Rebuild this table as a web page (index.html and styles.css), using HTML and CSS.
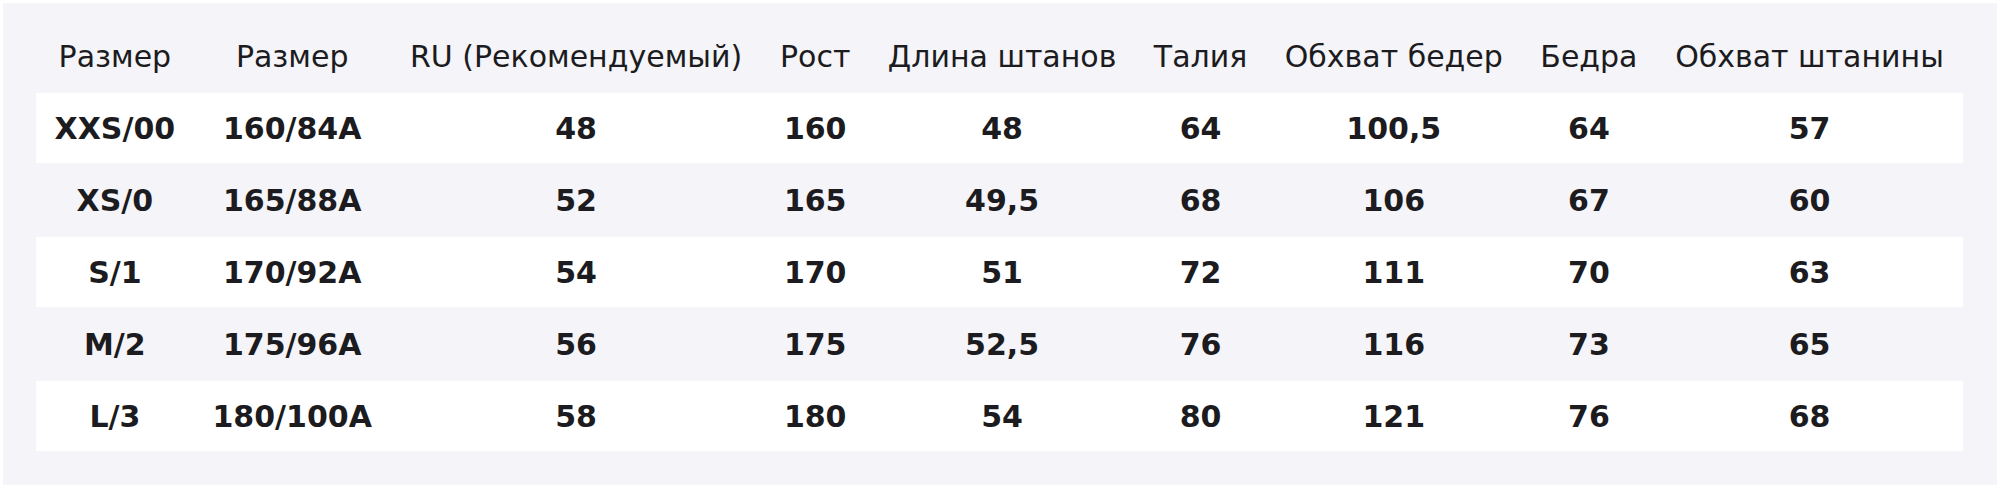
FILE: index.html
```html
<!DOCTYPE html>
<html lang="ru">
<head>
<meta charset="utf-8">
<title>Таблица размеров</title>
<link rel="stylesheet" href="styles.css">
</head>
<body>
<div class="panel">
  <table class="sizes">
    <thead>
      <tr>
        <th>Размер</th>
        <th>Размер</th>
        <th>RU (Рекомендуемый)</th>
        <th>Рост</th>
        <th>Длина штанов</th>
        <th>Талия</th>
        <th>Обхват бедер</th>
        <th>Бедра</th>
        <th>Обхват штанины</th>
      </tr>
    </thead>
    <tbody>
      <tr class="odd"><td>XXS/00</td><td>160/84A</td><td>48</td><td>160</td><td>48</td><td>64</td><td>100,5</td><td>64</td><td>57</td></tr>
      <tr><td>XS/0</td><td>165/88A</td><td>52</td><td>165</td><td>49,5</td><td>68</td><td>106</td><td>67</td><td>60</td></tr>
      <tr class="odd"><td>S/1</td><td>170/92A</td><td>54</td><td>170</td><td>51</td><td>72</td><td>111</td><td>70</td><td>63</td></tr>
      <tr><td>M/2</td><td>175/96A</td><td>56</td><td>175</td><td>52,5</td><td>76</td><td>116</td><td>73</td><td>65</td></tr>
      <tr class="odd"><td>L/3</td><td>180/100A</td><td>58</td><td>180</td><td>54</td><td>80</td><td>121</td><td>76</td><td>68</td></tr>
    </tbody>
  </table>
</div>
</body>
</html>
```

FILE: styles.css
```css
html, body {
  margin: 0;
  padding: 0;
  background: #ffffff;
}
body {
  font-family: "DejaVu Sans", sans-serif;
  color: #1b1b20;
}
.panel {
  margin: 3px;
  padding: 16px 34px 32px 33px;
  background: #f4f4f9;
}
.sizes {
  width: 100%;
  border-collapse: separate;
  border-spacing: 0 2px;
}
.sizes th,
.sizes td {
  height: 69px;
  padding: 1px 18px 0;
  text-align: center;
  vertical-align: middle;
  white-space: nowrap;
  font-size: 30px;
  line-height: 1;
}
.sizes th {
  font-weight: normal;
}
.sizes td {
  font-weight: bold;
}
.sizes tr.odd td {
  background: #ffffff;
}
```
